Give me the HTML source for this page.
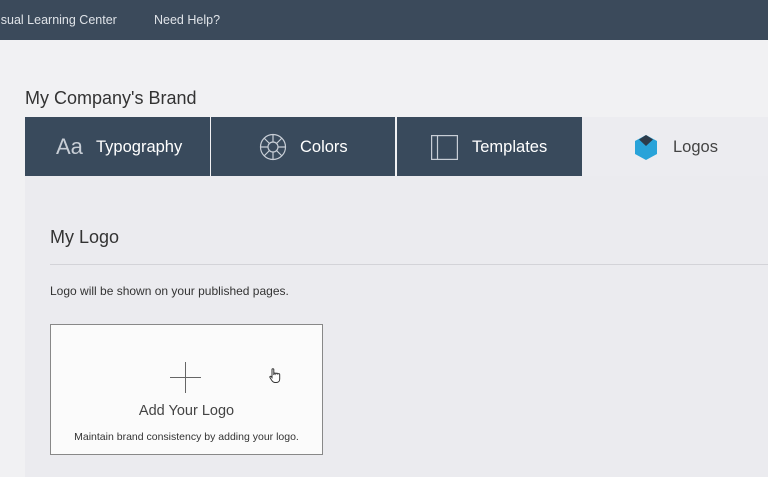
<!DOCTYPE html>
<html><head><style>
*{margin:0;padding:0;box-sizing:border-box}
body{width:768px;height:477px;overflow:hidden;background:#f1f1f3;font-family:"Liberation Sans",sans-serif;position:relative}
.top{position:absolute;left:0;top:0;width:768px;height:40px;background:#3b4a5b;color:#dfe3e8;font-size:12.5px}
.top span{position:absolute;top:13px}
.abs{position:absolute}
.tab{position:absolute;top:117px;height:59px;background:#394a5c;color:#fff;font-size:16.5px}
.tab .t{position:absolute;top:21px}
</style></head><body>
<div class="top"><span style="left:-2px">isual Learning Center</span><span style="left:154px">Need Help?</span></div>
<div class="abs" style="left:25px;top:88px;font-size:18px;color:#333">My Company's Brand</div>
<div class="tab" style="left:25px;width:185px">
 <div class="t" style="left:31px;top:17px;font-size:22px;font-weight:300;color:#c8ced6">Aa</div>
 <div class="t" style="left:71px">Typography</div></div>
<div class="tab" style="left:211px;width:184px">
 <svg class="abs" style="left:48px;top:16px" width="28" height="28" viewBox="0 0 28 28" fill="none" stroke="#c8ced6" stroke-width="1.2"><circle cx="14" cy="14" r="12.5"/><circle cx="14" cy="14" r="5"/><path d="M14 1.5V9M14 19v7.5M1.5 14H9M19 14h7.5M5 5l5.5 5.5M17.5 17.5L23 23M23 5l-5.5 5.5M10.5 17.5L5 23"/></svg>
 <div class="t" style="left:89px">Colors</div></div>
<div class="tab" style="left:397px;width:185px">
 <svg class="abs" style="left:34px;top:18px" width="27" height="25" viewBox="0 0 27 25" fill="none" stroke="#c8ced6" stroke-width="1.2"><rect x="0.6" y="0.6" width="25.8" height="23.8"/><path d="M6.5 1v23"/></svg>
 <div class="t" style="left:75px">Templates</div></div>
<div class="tab" style="left:582px;width:186px;background:#ececf0;color:#444">
 <svg class="abs" style="left:52px;top:17px" width="24" height="27" viewBox="0 0 24 27"><path d="M12 1L23 7V20L12 26L1 20V7Z" fill="#29a3d9"/><path d="M12 1L19 5.5L12 12L5 5.5Z" fill="#2d3b4a"/></svg>
 <div class="t" style="left:91px">Logos</div></div>
<div class="abs" style="left:25px;top:176px;width:743px;height:301px;background:#ebebef"></div>
<div class="abs" style="left:50px;top:227px;font-size:18px;color:#333">My Logo</div>
<div class="abs" style="left:50px;top:264px;width:718px;height:1px;background:#d3d3d8"></div>
<div class="abs" style="left:50px;top:284px;font-size:12px;color:#333">Logo will be shown on your published pages.</div>
<div class="abs" style="left:50px;top:324px;width:273px;height:131px;background:#fbfbfb;border:1px solid #888"></div>
<div class="abs" style="left:170px;top:377px;width:31px;height:1px;background:#666"></div>
<div class="abs" style="left:185px;top:362px;width:1px;height:31px;background:#666"></div>
<div class="abs" style="left:50px;top:403px;width:273px;text-align:center;font-size:14.5px;color:#444">Add Your Logo</div>
<div class="abs" style="left:50px;top:431px;width:273px;text-align:center;font-size:10.5px;color:#333">Maintain brand consistency by adding your logo.</div>
<svg class="abs" style="left:269px;top:368px" width="14" height="16" viewBox="0 0 14 16" fill="#fff" stroke="#333" stroke-width="1"><path d="M3 1.5c0-1 1.8-1 1.8 0V7l.5-1.5c.6-.8 1.6-.4 1.6.4l.3-.4c.6-.7 1.6-.3 1.6.5l.3-.2c.7-.5 1.6 0 1.6.8V11c0 2-1.3 3.5-3.4 3.5H6C4.5 14.5 3.5 13.5 2.5 12L1 9.5c-.5-.9.5-1.6 1.2-.9L3 9.5Z"/></svg>
</body></html>
